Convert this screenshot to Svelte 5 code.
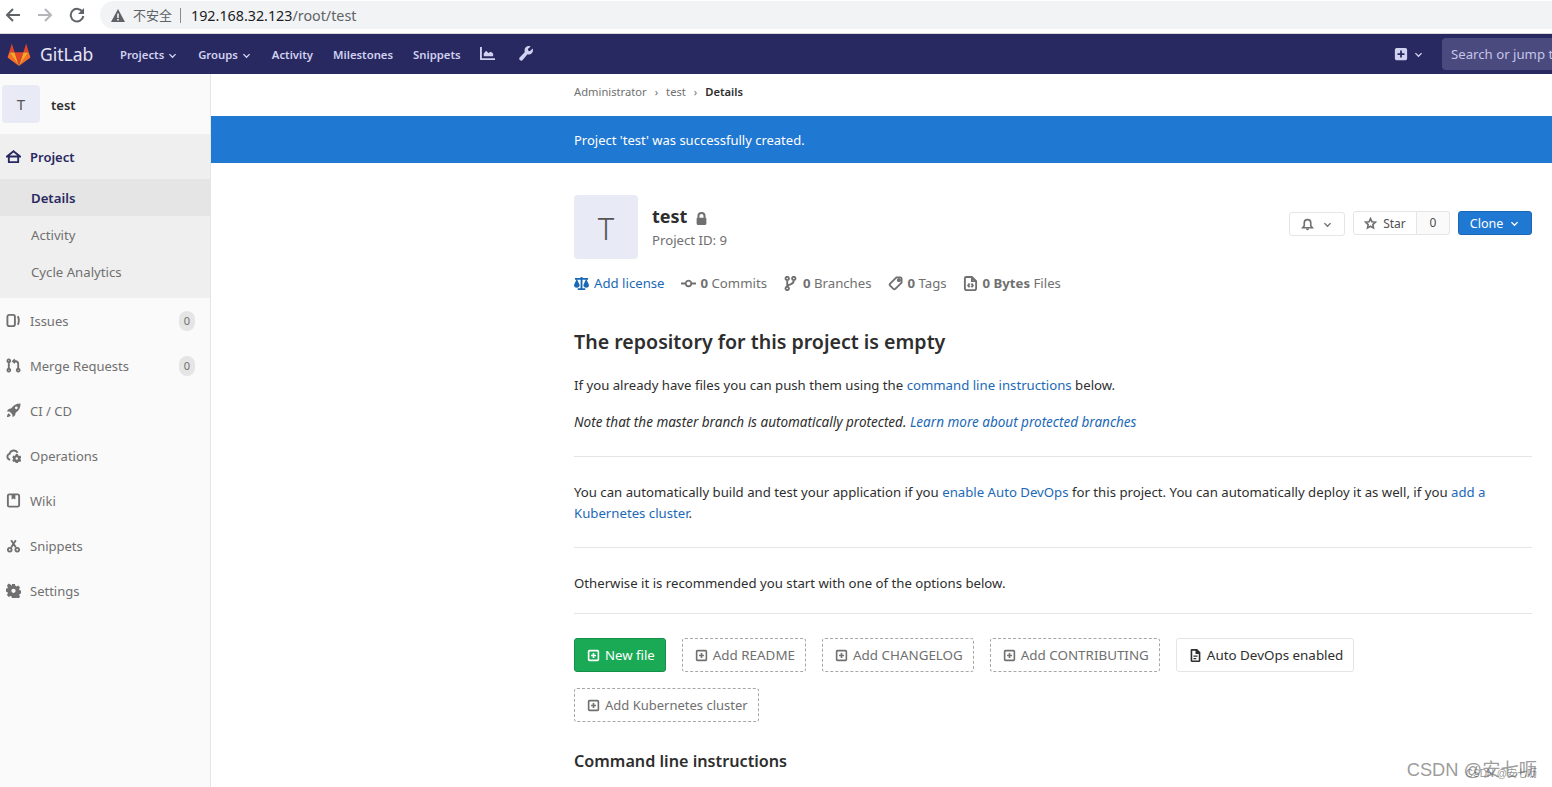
<script>
	const icons = {
		home: { fill: 'M8 1 16 7.5V9h-2v5a1 1 0 0 1-1 1H3a1 1 0 0 1-1-1V9H0V7.5zM8 3.6 4 6.8V7h8v-.2zM4 9v4h8V9z' },
		issues: { stroke: 'M3.5 2h4A2 2 0 0 1 9.5 4v8a2 2 0 0 1-2 2h-4a2 2 0 0 1-2-2V4a2 2 0 0 1 2-2zM12.5 3.5c1.6 2.4 1.6 6.6 0 9' },
		merge: { stroke: 'M3 5v6.5M13 11.5V6a2.5 2.5 0 0 0-2.5-2.5H8M9.5 1.5l-2 2 2 2M3 1.5a1.5 1.5 0 1 0 .01 0zM3 11.5a1.5 1.5 0 1 0 .01 0zM13 11.5a1.5 1.5 0 1 0 .01 0z' },
		rocket: { fill: 'M15.5.5c-4.5 0-7.6 1.7-9.8 5.2l-2.7.6L.8 8.8l3.2.6 2.6 2.6.6 3.2 2.5-2.2.6-2.7c3.5-2.2 5.2-5.3 5.2-9.8zM11 3.6a1.5 1.5 0 1 1 0 3 1.5 1.5 0 0 1 0-3zM3 11c-1 .5-1.8 1.8-2 4 2.2-.2 3.5-1 4-2z' },
		ops: { stroke: 'M4.5 12.5a3.2 3.2 0 0 1-.6-6.3A4.6 4.6 0 0 1 12.4 5', fill: 'M10.4 6.5h2.2l.3 1.3 1.2.7 1.2-.4 1 1.9-.9.9v1.2l.9.9-1 1.9-1.2-.4-1.2.7-.3 1.3h-2.2l-.3-1.3-1.2-.7-1.2.4-1-1.9.9-.9v-1.2l-.9-.9 1-1.9 1.2.4 1.2-.7zM11.5 9.9a1.3 1.3 0 1 0 0 2.6 1.3 1.3 0 0 0 0-2.6z' },
		wiki: { stroke: 'M3.5 1.5h9a1.5 1.5 0 0 1 1.5 1.5v10a1.5 1.5 0 0 1-1.5 1.5h-9A1.5 1.5 0 0 1 2 13V3a1.5 1.5 0 0 1 1.5-1.5z', fill: 'M6 2h4v5L8 5.8 6 7z' },
		snippet: { stroke: 'M5.6 9.8 10.5 2.500M10.400 9.800 5.500 2.500M4 10.500a2 2 0 1 0 .01 0zM12 10.500a2 2 0 1 0 .01 0z' },
		gear: { fill: 'M6.5 1h3l.5 2 1.200.6 1.800-1 2 2.100-1 1.800.5 1.200 2 .5v3l-2 .5-.5 1.200 1 1.800-2 2.100-1.800-1-1.200.6-.5 1.600h-3L6 14.400l-1.200-.6-1.800 1-2-2.100 1-1.800-.5-1.200-2-.5v-3l2-.5.5-1.200-1-1.800 2-2.100 1.800 1L6 3zM8 6a2.300 2.300 0 1 0 0 4.600A2.300 2.300 0 0 0 8 6z' },
		lock: { fill: 'M3 7V5a5 5 0 0 1 10 0v2a1 1 0 0 1 1 1v6a2 2 0 0 1-2 2H4a2 2 0 0 1-2-2V8a1 1 0 0 1 1-1zM5.5 7h5V5a2.5 2.5 0 0 0-5 0z' },
		scale: { fill: 'M7 1h2v1h6v2h-1.500l2.500 5.500c0 1.900-1.200 3-3 3s-3-1.100-3-3L12.500 4H9v9h3v2H4v-2h3V4H3.500L6 9.500c0 1.900-1.200 3-3 3s-3-1.100-3-3L2.500 4H1V2h6z' },
		commit: { stroke: 'M0 8h4.500M11.500 8H16M8 5a3 3 0 1 0 .01 0z' },
		branch: { stroke: 'M4.500 4.500v7M11.500 4.500c0 3-2 4-3.500 4.500-2 .5-3.500 1-3.500 2.500M4.500 .8a1.800 1.800 0 1 0 .01 0zM11.500 .8a1.800 1.800 0 1 0 .01 0zM4.500 11.500a1.800 1.800 0 1 0 .01 0z' },
		tag: { stroke: 'M9 1.500h4a1.500 1.500 0 0 1 1.500 1.500v4L7.800 13.700a1.500 1.500 0 0 1-2.100 0l-3.400-3.400a1.500 1.500 0 0 1 0-2.100zM11.500 3.500a1 1 0 1 0 .01 0z' },
		doc: { stroke: 'M3.500 1H9.500L14 5.500V13a2 2 0 0 1-2 2H4a2 2 0 0 1-2-2V2.500A1.500 1.500 0 0 1 3.500 1zM9.500 1v4.500H14M7 8 5.500 10 7 12M9 8l1.500 2L9 12' },
		bell: { stroke: 'M8 2a4 4 0 0 1 4 4v3.500l2 2.500H2l2-2.500V6a4 4 0 0 1 4-4z', fill: 'M6 13h4a2 2 0 0 1-4 0z' },
		star: { stroke: 'M8 2l1.800 3.900 4.200.5-3.100 2.900.8 4.200L8 11.400l-3.700 2.100.8-4.200L2 6.400l4.200-.5z' },
		chevron: { chev: 'M3.500 6 8 10.500 12.500 6' },
		plus: { fill: 'M3 1h10a2 2 0 0 1 2 2v10a2 2 0 0 1-2 2H3a2 2 0 0 1-2-2V3a2 2 0 0 1 2-2zM3.500 3a.5.5 0 0 0-.5.5v9a.5.5 0 0 0 .5.5h9a.5.5 0 0 0 .5-.5v-9a.5.5 0 0 0-.5-.5zM7 5h2v2h2v2H9v2H7V9H5V7h2z' },
		plusSolid: { fill: 'M3 1h10a2 2 0 0 1 2 2v10a2 2 0 0 1-2 2H3a2 2 0 0 1-2-2V3a2 2 0 0 1 2-2zM7 4v3H4v2h3v3h2V9h3V7H9V4z' },
		file: { fill: 'M3.500 0H10l4 4v10a2 2 0 0 1-2 2H4a2 2 0 0 1-2-2V1.500A1.500 1.500 0 0 1 3.500 0zM4 2v12h8V6H8V2zM5.500 8h5v1.500h-5zM5.500 11h3.500v1.500H5.500z' },
		chart: { fill: 'M0 1h2v12h14v2H1a1 1 0 0 1-1-1zM4 11V8l2.500-3L9 7.500 11.500 6 14 8v3z' },
		wrench: { fill: 'M11.500 0c.7 0 1.300.1 1.900.4L10.500 3.300 11 5l1.700.5L15.600 2.600c.3.600.4 1.200.4 1.900 0 2.500-2 4.500-4.500 4.500-.5 0-1-.1-1.400-.2L5 15a2.100 2.100 0 0 1-3-3L6.900 6.900 7.200 5.900C7 5.500 7 5 7 4.500 7 2 9 0 11.500 0z' }
	};

	const subItems = ['Activity', 'Cycle Analytics'];
	const sideItems = [
		{ label: 'Issues', icon: 'issues', count: 0 },
		{ label: 'Merge Requests', icon: 'merge', count: 0 },
		{ label: 'CI / CD', icon: 'rocket' },
		{ label: 'Operations', icon: 'ops' },
		{ label: 'Wiki', icon: 'wiki' },
		{ label: 'Snippets', icon: 'snippet' },
		{ label: 'Settings', icon: 'gear' }
	];
	const dashed = ['Add README', 'Add CHANGELOG', 'Add CONTRIBUTING'];
</script>

{#snippet icon(name, size = 16)}
	<svg class="icon" width={size} height={size} viewBox="0 0 16 16" aria-hidden="true">
		{#if icons[name].fill}<path d={icons[name].fill} fill="currentColor" fill-rule="evenodd" />{/if}
		{#if icons[name].stroke}<path d={icons[name].stroke} fill="none" stroke="currentColor" stroke-width="2" />{/if}
		{#if icons[name].chev}<path d={icons[name].chev} fill="none" stroke="currentColor" stroke-width="2" />{/if}
	</svg>
{/snippet}

<div class="page">
	<header class="browser">
		<svg class="arrow" width="16" height="16" viewBox="0 0 16 16"><path d="M15 8H2M8 2 2 8l6 6" fill="none" stroke="#5f6368" stroke-width="2" /></svg>
		<svg class="arrow forward" width="16" height="16" viewBox="0 0 16 16"><path d="M1 8h13M8 2l6 6-6 6" fill="none" stroke="#b4b6b9" stroke-width="2" /></svg>
		<svg class="arrow reload" width="16" height="16" viewBox="0 0 16 16"><path d="M13.500 5A6.300 6.300 0 1 0 14.300 9" fill="none" stroke="#5f6368" stroke-width="2" /><path d="M15 1v6H9z" fill="#5f6368" /></svg>
		<div class="omnibox">
			<svg width="14" height="13" viewBox="0 0 14 13"><path d="M7 0l7 13H0zM6.200 4.500v4.500h1.600V4.500zM6.200 10v1.500h1.600V10z" fill="#5f6368" fill-rule="evenodd" /></svg>
			<span class="insecure">不安全</span>
			<span class="url">192.168.32.123<span class="path">/root/test</span></span>
		</div>
	</header>

	<nav class="navbar">
		<div class="brand">
			<svg width="24" height="23" viewBox="0 0 24 23">
				<path d="M12 23 .6 14.400l1.600-5.200z" fill="#fc6d26" />
				<path d="M12 23 23.400 14.400l-1.600-5.200z" fill="#fc6d26" />
				<path d="M12 23 7.600 9.200h8.800z" fill="#e24329" />
				<path d="M12 23 2.200 9.200h5.400z" fill="#fca326" />
				<path d="M12 23l9.800-13.800h-5.400z" fill="#fca326" />
				<path d="M2.200 9.200 4.800.6l2.800 8.600z" fill="#e24329" />
				<path d="M21.800 9.200 19.200.6l-2.800 8.600z" fill="#e24329" />
			</svg>
			<span class="brand-name">GitLab</span>
		</div>
		<ul class="nav-links">
			<li>Projects {@render icon('chevron', 11)}</li>
			<li>Groups {@render icon('chevron', 11)}</li>
			<li>Activity</li>
			<li>Milestones</li>
			<li>Snippets</li>
			<li class="chart">{@render icon('chart', 15)}</li>
			<li class="wrench">{@render icon('wrench', 15)}</li>
		</ul>
		<div class="nav-right">
			<span class="new-menu">{@render icon('plusSolid', 14)} {@render icon('chevron', 11)}</span>
			<div class="search">Search or jump to…</div>
		</div>
	</nav>

	<div class="layout">
		<aside class="sidebar">
			<div class="side-head">
				<span class="side-avatar">T</span>
				<span class="side-name">test</span>
			</div>
			<div class="side-group">
				<div class="side-title">{@render icon('home', 15)} <span>Project</span></div>
				<div class="side-sub current">Details</div>
				{#each subItems as item}
					<div class="side-sub">{item}</div>
				{/each}
			</div>
			{#each sideItems as item}
				<div class="side-item">
					{@render icon(item.icon, 15)}
					<span>{item.label}</span>
					{#if item.count !== undefined}<span class="count">{item.count}</span>{/if}
				</div>
			{/each}
		</aside>

		<main class="content">
			<div class="wrap crumbs">
				<span>Administrator</span><i class="sep">›</i>
				<span>test</span><i class="sep">›</i>
				<b>Details</b>
			</div>
			<div class="flash"><div class="wrap">Project 'test' was successfully created.</div></div>

			<div class="wrap">
				<section class="project-head">
					<div class="avatar">T</div>
					<div class="project-title">
						<h1>test {@render icon('lock', 13)}</h1>
						<p>Project ID: 9</p>
					</div>
					<div class="actions">
						<button class="btn bell">{@render icon('bell', 13)} {@render icon('chevron', 11)}</button>
						<div class="star-group">
							<button class="btn star">{@render icon('star', 13)} Star</button>
							<span class="star-count">0</span>
						</div>
						<button class="btn clone">Clone {@render icon('chevron', 11)}</button>
					</div>
				</section>

				<div class="stats">
					<a class="stat link">{@render icon('scale', 15)} <span>Add license</span></a>
					<span class="stat">{@render icon('commit', 15)} <span><b>0</b> Commits</span></span>
					<span class="stat">{@render icon('branch', 15)} <span><b>0</b> Branches</span></span>
					<span class="stat">{@render icon('tag', 15)} <span><b>0</b> Tags</span></span>
					<span class="stat">{@render icon('doc', 15)} <span><b>0 Bytes</b> Files</span></span>
				</div>

				<h2 class="empty-title">The repository for this project is empty</h2>
				<p class="first">If you already have files you can push them using the <a>command line instructions</a> below.</p>
				<p class="note"><em>Note that the master branch is automatically protected. <a>Learn more about protected branches</a></em></p>
				<hr />
				<p class="auto">You can automatically build and test your application if you <a>enable Auto DevOps</a> for this project. You can automatically deploy it as well, if you <a>add a Kubernetes cluster</a>.</p>
				<hr />
				<p class="other">Otherwise it is recommended you start with one of the options below.</p>
				<hr class="last" />

				<div class="options">
					<button class="btn-opt new">{@render icon('plus', 13)} New file</button>
					{#each dashed as label}
						<button class="btn-opt dash caps">{@render icon('plus', 13)} {label}</button>
					{/each}
					<button class="btn-opt solid caps">{@render icon('file', 13)} Auto DevOps enabled</button>
					<button class="btn-opt dash">{@render icon('plus', 13)} Add Kubernetes cluster</button>
				</div>

				<h3 class="cli">Command line instructions</h3>
			</div>
		</main>
	</div>

	<div class="watermark">CSDN @安七呖<span class="mini">CSDN @安七呖</span></div>
</div>

<style>
	:global(body) {
		margin: 0;
		background: #fff;
	}

	.page {
		position: relative;
		height: 787px;
		overflow: hidden;
		font-family: 'Noto Sans', 'Noto Sans CJK SC', sans-serif;
		font-size: 13px;
		color: #2e2e2e;
	}

	.icon {
		flex: none;
		vertical-align: -2px;
	}

	.browser {
		display: flex;
		align-items: center;
		height: 33px;
		padding-left: 5px;
		border-bottom: 1px solid #d8dadd;
	}

	.arrow {
		margin-right: 16px;
		margin-top: -3px;
	}

	.omnibox {
		display: flex;
		align-items: center;
		flex: 1;
		height: 28px;
		margin: -3px 0 0 -1px;
		padding-left: 11px;
		background: #f1f3f4;
		border-radius: 14px 0 0 14px;
	}

	.insecure {
		margin-left: 8px;
		padding-right: 8px;
		border-right: 1px solid #8a8c8f;
		line-height: 15px;
		color: #5f6368;
		font-size: 13px;
	}

	.url {
		margin-left: 10px;
		color: #202124;
		font-size: 14.300px;
	}

	.path {
		color: #5f6368;
	}

	.navbar {
		display: flex;
		align-items: center;
		height: 40px;
		background: #292961;
		color: #d1d1f0;
		font-size: 11.300px;
		font-weight: 600;
	}

	.brand {
		display: flex;
		align-items: center;
		width: 120px;
		padding-left: 7px;
		box-sizing: border-box;
		color: #fff;
	}

	.brand-name {
		margin-left: 9px;
		font-size: 17.500px;
		font-weight: 400;
		color: #e6e6f5;
	}

	.nav-links {
		display: flex;
		align-items: center;
		gap: 20px;
		margin: 0;
		padding: 0;
		list-style: none;
	}

	.nav-links .chart {
		margin-left: -1px;
	}

	.nav-links .wrench {
		margin-left: 3px;
	}

	.nav-right {
		display: flex;
		align-items: center;
		margin-left: auto;
	}

	.new-menu {
		display: flex;
		align-items: center;
		gap: 5px;
		margin-right: 18px;
	}

	.search {
		width: 101px;
		height: 32px;
		padding-left: 9px;
		background: #4a4a7e;
		border-radius: 4px 0 0 4px;
		font-size: 13.200px;
		font-weight: 400;
		line-height: 33px;
		color: #c5c5e8;
		white-space: nowrap;
		overflow: hidden;
	}

	.layout {
		display: flex;
		height: 713px;
	}

	.sidebar {
		flex: none;
		width: 211px;
		box-sizing: border-box;
		background: #fafafa;
		border-right: 1px solid #e5e5e5;
		color: #707070;
	}

	.side-head {
		display: flex;
		align-items: center;
		height: 60px;
		padding-left: 2px;
		color: #2e2e2e;
		font-weight: 600;
	}

	.side-name {
		padding-top: 2px;
	}

	.side-avatar {
		width: 38px;
		height: 38px;
		margin-right: 11px;
		background: #e8eaf6;
		border-radius: 4px;
		font-size: 15px;
		font-weight: 400;
		line-height: 38px;
		text-align: center;
		color: #555;
	}

	.side-group {
		height: 164px;
		background: #efefef;
	}

	.side-title {
		display: flex;
		align-items: center;
		gap: 9px;
		height: 45px;
		padding-left: 6px;
		color: #292961;
		font-weight: 600;
	}

	.side-sub {
		height: 37px;
		padding-left: 31px;
		font-size: 13.200px;
		line-height: 39px;
		color: #707070;
	}

	.side-sub.current {
		background: #e5e5e5;
		color: #292961;
		font-weight: 600;
	}

	.side-item {
		display: flex;
		align-items: center;
		gap: 9px;
		height: 45px;
		padding: 0 15px 0 6px;
	}

	.count {
		width: 16px;
		margin-left: auto;
		background: #e5e5e5;
		border-radius: 10px;
		font-size: 11px;
		line-height: 20px;
		text-align: center;
	}

	.content {
		flex: 1;
		min-width: 0;
	}

	.wrap {
		padding: 0 20px 0 363px;
	}

	.crumbs {
		display: flex;
		align-items: center;
		height: 34px;
		padding-bottom: 8px;
		font-size: 11.200px;
		color: #707070;
	}

	.crumbs b {
		color: #2e2e2e;
		font-weight: 600;
	}

	.sep {
		margin: 0 8px;
		font-style: normal;
		font-size: 11px;
	}

	.flash {
		height: 47px;
		background: #1f78d1;
		color: #fff;
		line-height: 48px;
	}

	.project-head {
		display: flex;
		align-items: center;
		margin-top: 32px;
		height: 64px;
	}

	.avatar {
		width: 64px;
		height: 64px;
		margin-right: 14px;
		background: #e8eaf6;
		border-radius: 4px;
		font-size: 31px;
		font-weight: 300;
		line-height: 67px;
		text-align: center;
		color: #555;
	}

	.project-title {
		margin-top: -1px;
	}

	h1 {
		margin: 0;
		padding-top: 1px;
		font-size: 18px;
		font-weight: 700;
		line-height: 26px;
	}

	h1 .icon {
		color: #707070;
		margin-left: 3px;
	}

	.project-title p {
		margin: 1px 0 0;
		color: #707070;
		line-height: 20px;
	}

	.actions {
		display: flex;
		align-items: flex-start;
		gap: 8px;
		margin-left: auto;
		margin-top: -7px;
	}

	.btn {
		display: inline-flex;
		align-items: center;
		justify-content: center;
		gap: 6px;
		box-sizing: border-box;
		height: 24px;
		padding: 0 10px;
		background: #fff;
		border: 1px solid #e5e5e5;
		border-radius: 3px;
		font: inherit;
		font-size: 12px;
		color: #4f4f4f;
	}

	.bell {
		width: 56px;
		margin-top: 1px;
		gap: 8px;
		color: #707070;
	}

	.star-group {
		display: flex;
	}

	.star {
		width: 64px;
		border-radius: 3px 0 0 3px;
		color: #4f4f4f;
	}

	.star .icon {
		color: #707070;
	}

	.star-count {
		width: 33px;
		box-sizing: border-box;
		height: 24px;
		background: #fafafa;
		border: 1px solid #e5e5e5;
		border-left: 0;
		border-radius: 0 3px 3px 0;
		font-size: 12px;
		line-height: 22px;
		text-align: center;
		color: #4f4f4f;
	}

	.clone {
		width: 74px;
		background: #1f78d1;
		border-color: #1b69b6;
		color: #fff;
		font-size: 12.500px;
	}

	.stats {
		display: flex;
		align-items: center;
		gap: 16px;
		height: 20px;
		margin-top: 14px;
		font-size: 13.200px;
		color: #707070;
	}

	.stat {
		display: inline-flex;
		align-items: center;
		gap: 5px;
	}

	.stat b {
		font-weight: 700;
	}

	.stat.link,
	a {
		color: #1b69b6;
	}

	h2 {
		margin: 35px 0 0;
		font-size: 19.600px;
		font-weight: 600;
		line-height: 28px;
	}

	.content p {
		font-size: 13.200px;
		line-height: 21px;
	}

	.content .note {
		font-size: 13.500px;
	}

	.first {
		margin: 19px 0 0;
	}

	.note {
		margin: 16px 0 0;
	}

	hr {
		margin: 23px 0 0;
		border: 0;
		border-top: 1px solid #e5e5e5;
	}

	hr.last {
		margin-top: 19px;
	}

	.auto {
		margin: 25px 0 0;
	}

	.other {
		margin: 25px 0 0;
	}

	.options {
		display: flex;
		flex-wrap: wrap;
		gap: 16px;
		margin-top: 24px;
	}

	.btn-opt {
		display: inline-flex;
		align-items: center;
		gap: 5px;
		box-sizing: border-box;
		height: 34px;
		padding: 0 10px 0 12px;
		background: #fff;
		border: 1px solid #e5e5e5;
		border-radius: 3px;
		font: inherit;
		color: #2e2e2e;
	}

	.caps {
		font-size: 13.400px;
	}

	.new {
		background: #1aaa55;
		border-color: #168f48;
		color: #fff;
		font-size: 13.200px;
	}

	.dash {
		border: 1px dashed #a7a7a7;
		color: #707070;
	}

	.cli {
		margin: 27px 0 0;
		font-size: 16.200px;
		font-weight: 600;
		line-height: 24px;
	}

	.watermark {
		position: absolute;
		right: 15px;
		bottom: 6px;
		font-family: 'Liberation Sans', 'Noto Sans CJK SC', sans-serif;
		font-size: 18.300px;
		color: rgba(130, 130, 130, 0.8);
	}

	.mini {
		position: absolute;
		right: 0;
		bottom: 1px;
		font-size: 10px;
		color: rgba(100, 100, 100, 0.7);
		white-space: nowrap;
	}
</style>
